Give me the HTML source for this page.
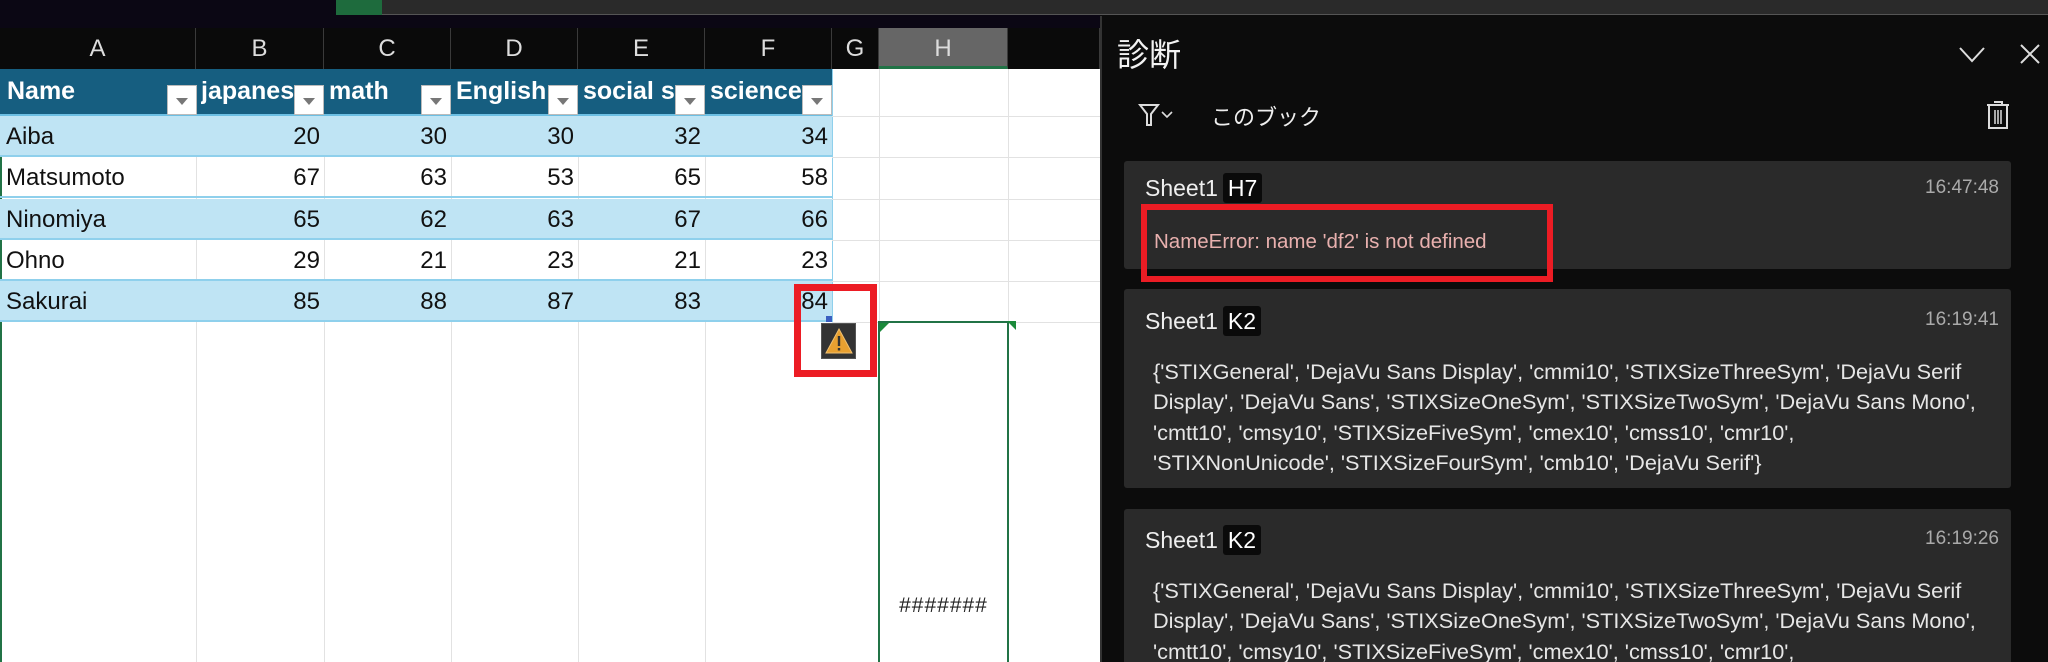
<!DOCTYPE html>
<html style="width:2048px;height:662px;overflow:hidden"><head><meta charset="utf-8"><style>
*{margin:0;padding:0;box-sizing:border-box}
body{width:2048px;height:662px;overflow:hidden;background:#0c0c0c;position:relative;font-family:"Liberation Sans","Noto Sans CJK JP",sans-serif}
.a{position:absolute}
.topbar{left:0;top:0;width:1100px;height:28px;background:#0b0714}
.colh{top:28px;height:41px;background:#0a0a0a;color:#ddd;font-size:24px;text-align:center;line-height:41px;border-right:1px solid #3a3a3a}
.sheet{left:0;top:69px;width:1100px;height:593px;background:#fff}
.vl{top:69px;width:1px;height:593px;background:#e2e2e2}
.hl{left:832px;width:268px;height:1px;background:#e2e2e2}
.row{left:0;width:832px;height:41px;border-bottom:2px solid #8fd0ec;font-size:24px;color:#111}
.band{background:#bfe4f4}
.c{position:absolute;top:0;height:41px;line-height:41px}
.num{text-align:right}
.hdr{left:0;top:69px;width:832px;height:47px;background:#165e80;border-bottom:2px solid #6cbfe3}
.hdr .t{position:absolute;top:0;line-height:44px;color:#fff;font-weight:bold;font-size:25px;white-space:nowrap;overflow:hidden}
.fb{position:absolute;top:16px;width:30px;height:30px;background:#fff;border:1px solid #bbb}
.fb:after{content:"";position:absolute;left:8px;top:12px;border-left:6px solid transparent;border-right:6px solid transparent;border-top:7px solid #777}
.card{left:1124px;width:887px;background:#2a2a2a;border-radius:3px;overflow:hidden}
.st{position:absolute;left:21px;font-size:23px;color:#eee}
.bd{background:#0a0a0a;color:#fff;padding:2px 5px;border-radius:3px;margin-left:5px}
.tm{position:absolute;right:12px;font-size:19px;color:#aaa}
.tx{position:absolute;left:29px;font-size:21.7px;color:#e6e6e6;line-height:30.4px;white-space:nowrap}
</style></head><body>
<div class="a topbar"></div>
<div class="a" style="left:336px;top:0;width:46px;height:15px;background:#1e6b3d"></div>
<div class="a" style="left:382px;top:0;width:718px;height:15px;background:#2a2a2a;border-bottom:1px solid #555"></div>
<div class="a" style="left:1100px;top:0;width:948px;height:15px;background:#2a2a2a;border-bottom:1px solid #555"></div>

<div class="a colh" style="left:0;width:196px">A</div>
<div class="a colh" style="left:196px;width:128px">B</div>
<div class="a colh" style="left:324px;width:127px">C</div>
<div class="a colh" style="left:451px;width:127px">D</div>
<div class="a colh" style="left:578px;width:127px">E</div>
<div class="a colh" style="left:705px;width:127px">F</div>
<div class="a colh" style="left:832px;width:47px">G</div>
<div class="a colh" style="left:879px;width:129px;background:#666;border-bottom:3px solid #217346">H</div>
<div class="a colh" style="left:1008px;width:92px"></div>

<div class="a sheet"></div>
<div class="a vl" style="left:196px"></div><div class="a vl" style="left:324px"></div><div class="a vl" style="left:451px"></div><div class="a vl" style="left:578px"></div><div class="a vl" style="left:705px"></div><div class="a vl" style="left:832px;background:#8fd0ec;height:253px"></div><div class="a vl" style="left:879px"></div><div class="a vl" style="left:1008px"></div>
<div class="a hl" style="top:116px"></div><div class="a hl" style="top:157px"></div><div class="a hl" style="top:199px"></div><div class="a hl" style="top:240px"></div><div class="a hl" style="top:281px"></div><div class="a hl" style="top:322px"></div>
<div class="a" style="left:0;top:69px;width:2px;height:593px;background:#217346"></div>

<div class="a hdr">
<div class="t" style="left:7px;width:160px">Name</div><div class="fb" style="left:167px"></div>
<div class="t" style="left:201px;width:94px">japanese</div><div class="fb" style="left:294px"></div>
<div class="t" style="left:329px">math</div><div class="fb" style="left:421px"></div>
<div class="t" style="left:456px;width:92px">English</div><div class="fb" style="left:548px"></div>
<div class="t" style="left:583px;width:92px">social st</div><div class="fb" style="left:675px"></div>
<div class="t" style="left:710px;width:92px">science</div><div class="fb" style="left:802px"></div>
</div>

<div class="a row band" style="top:116px"><div class="c" style="left:6px">Aiba</div><div class="c num" style="left:196px;width:124px">20</div><div class="c num" style="left:324px;width:123px">30</div><div class="c num" style="left:451px;width:123px">30</div><div class="c num" style="left:578px;width:123px">32</div><div class="c num" style="left:705px;width:123px">34</div></div>
<div class="a row" style="top:157px"><div class="c" style="left:6px">Matsumoto</div><div class="c num" style="left:196px;width:124px">67</div><div class="c num" style="left:324px;width:123px">63</div><div class="c num" style="left:451px;width:123px">53</div><div class="c num" style="left:578px;width:123px">65</div><div class="c num" style="left:705px;width:123px">58</div></div>
<div class="a row band" style="top:199px"><div class="c" style="left:6px">Ninomiya</div><div class="c num" style="left:196px;width:124px">65</div><div class="c num" style="left:324px;width:123px">62</div><div class="c num" style="left:451px;width:123px">63</div><div class="c num" style="left:578px;width:123px">67</div><div class="c num" style="left:705px;width:123px">66</div></div>
<div class="a row" style="top:240px"><div class="c" style="left:6px">Ohno</div><div class="c num" style="left:196px;width:124px">29</div><div class="c num" style="left:324px;width:123px">21</div><div class="c num" style="left:451px;width:123px">23</div><div class="c num" style="left:578px;width:123px">21</div><div class="c num" style="left:705px;width:123px">23</div></div>
<div class="a row band" style="top:281px"><div class="c" style="left:6px">Sakurai</div><div class="c num" style="left:196px;width:124px">85</div><div class="c num" style="left:324px;width:123px">88</div><div class="c num" style="left:451px;width:123px">87</div><div class="c num" style="left:578px;width:123px">83</div><div class="c num" style="left:705px;width:123px">84</div></div>
<div class="a" style="left:826px;top:316px;width:6px;height:6px;background:#3a5fc0"></div>

<div class="a" style="left:878px;top:321px;width:131px;height:341px;border:2px solid #217346;border-bottom:none"></div>
<div class="a" style="left:880px;top:323px;width:0;height:0;border-top:9px solid #1a8a3a;border-right:9px solid transparent"></div>
<div class="a" style="left:1007px;top:321px;width:0;height:0;border-top:9px solid #1a8a3a;border-left:9px solid transparent"></div>
<div class="a" style="left:880px;top:594px;width:127px;text-align:center;font-size:21px;color:#222;letter-spacing:1px">#######</div>

<div class="a" style="left:794px;top:284px;width:83px;height:93px;border:7px solid #ec1c24"></div>
<div class="a" style="left:821px;top:323px;width:35px;height:36px;background:#333;border:1px solid #555"></div>
<svg class="a" style="left:824px;top:326px" width="30" height="30" viewBox="0 0 30 30"><path d="M15 3 L28 27 L2 27 Z" fill="#e8a030" stroke="#f0c070" stroke-width="1"/><rect x="13.8" y="10" width="2.4" height="10" fill="#333"/><rect x="13.8" y="22" width="2.4" height="2.5" fill="#333"/></svg>

<div class="a" style="left:1100px;top:16px;width:2px;height:646px;background:#333"></div>
<div class="a" style="left:1117px;top:30px;font-size:32px;color:#f2f2f2">診断</div>
<svg class="a" style="left:1958px;top:46px" width="28" height="18"><path d="M2 2 L14 15 L26 2" fill="none" stroke="#ddd" stroke-width="2"/></svg>
<svg class="a" style="left:2019px;top:43px" width="22" height="22"><path d="M2 2 L20 20 M20 2 L2 20" stroke="#ddd" stroke-width="2"/></svg>
<svg class="a" style="left:1138px;top:102px" width="44" height="26"><path d="M2 3 H20 L13 12 V23 H9 V12 Z" fill="none" stroke="#ddd" stroke-width="2"/><path d="M24 10 L29 15 L34 10" fill="none" stroke="#ddd" stroke-width="1.6"/></svg>
<div class="a" style="left:1211px;top:100px;font-size:22px;color:#eee">このブック</div>
<svg class="a" style="left:1985px;top:99px" width="26" height="32"><path d="M9 3 H17 V6 M2 6 H24" fill="none" stroke="#ddd" stroke-width="2"/><path d="M4 7 V29 H22 V7" fill="none" stroke="#ddd" stroke-width="2"/><path d="M10 11 V25 M13 11 V25 M16 11 V25" stroke="#ddd" stroke-width="1.5"/></svg>

<div class="a card" style="top:161px;height:108px">
<div class="st" style="top:14px">Sheet1<span class="bd">H7</span></div>
<div class="tm" style="top:16px">16:47:48</div>
<div class="a" style="left:30px;top:69px;font-size:20.5px;color:#e8b0ae">NameError: name 'df2' is not defined</div>
</div>
<div class="a" style="left:1141px;top:204px;width:412px;height:78px;border:6px solid #ec1c24"></div>

<div class="a card" style="top:289px;height:199px">
<div class="st" style="top:19px">Sheet1<span class="bd">K2</span></div>
<div class="tm" style="top:20px">16:19:41</div>
<div class="tx" style="top:68px">{'STIXGeneral', 'DejaVu Sans Display', 'cmmi10', 'STIXSizeThreeSym', 'DejaVu Serif<br>Display', 'DejaVu Sans', 'STIXSizeOneSym', 'STIXSizeTwoSym', 'DejaVu Sans Mono',<br>'cmtt10', 'cmsy10', 'STIXSizeFiveSym', 'cmex10', 'cmss10', 'cmr10',<br>'STIXNonUnicode', 'STIXSizeFourSym', 'cmb10', 'DejaVu Serif'}</div>
</div>
<div class="a card" style="top:509px;height:153px;border-radius:3px 3px 0 0">
<div class="st" style="top:18px">Sheet1<span class="bd">K2</span></div>
<div class="tm" style="top:19px">16:19:26</div>
<div class="tx" style="top:67px">{'STIXGeneral', 'DejaVu Sans Display', 'cmmi10', 'STIXSizeThreeSym', 'DejaVu Serif<br>Display', 'DejaVu Sans', 'STIXSizeOneSym', 'STIXSizeTwoSym', 'DejaVu Sans Mono',<br>'cmtt10', 'cmsy10', 'STIXSizeFiveSym', 'cmex10', 'cmss10', 'cmr10',</div>
</div>
</body></html>
